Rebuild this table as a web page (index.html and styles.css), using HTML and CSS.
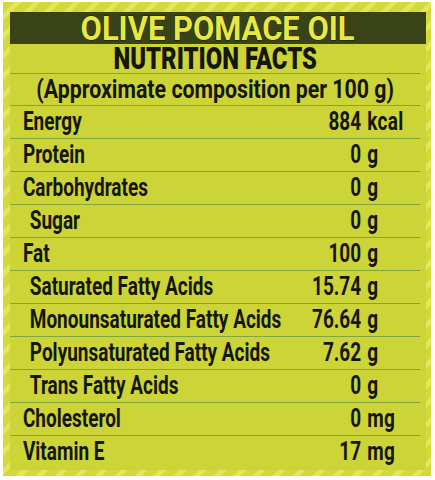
FILE: index.html
```html
<!DOCTYPE html>
<html lang="en">
<head>
  <meta charset="UTF-8">
  <title>Olive Pomace Oil - Nutrition Facts</title>
  <link rel="stylesheet" href="styles.css">
</head>
<body>
  <div class="label">
    <div class="panel">
      <div class="band"><span class="squeeze">OLIVE POMACE OIL</span></div>
      <div class="heading"><span class="squeeze">NUTRITION FACTS</span></div>
      <div class="sub"><span class="squeeze">(Approximate composition per 100 g)</span></div>

      <div class="row"><div class="cells"><span>Energy</span><span class="num">884</span><span class="unit">kcal</span></div></div>
      <div class="row"><div class="cells"><span>Protein</span><span class="num">0</span><span class="unit">g</span></div></div>
      <div class="row"><div class="cells"><span>Carbohydrates</span><span class="num">0</span><span class="unit">g</span></div></div>
      <div class="row"><div class="cells sub-item"><span>Sugar</span><span class="num">0</span><span class="unit">g</span></div></div>
      <div class="row"><div class="cells"><span>Fat</span><span class="num">100</span><span class="unit">g</span></div></div>
      <div class="row"><div class="cells sub-item"><span>Saturated Fatty Acids</span><span class="num">15.74</span><span class="unit">g</span></div></div>
      <div class="row"><div class="cells sub-item"><span>Monounsaturated Fatty Acids</span><span class="num">76.64</span><span class="unit">g</span></div></div>
      <div class="row"><div class="cells sub-item"><span>Polyunsaturated Fatty Acids</span><span class="num">7.62</span><span class="unit">g</span></div></div>
      <div class="row"><div class="cells sub-item"><span>Trans Fatty Acids</span><span class="num">0</span><span class="unit">g</span></div></div>
      <div class="row"><div class="cells"><span>Cholesterol</span><span class="num">0</span><span class="unit">mg</span></div></div>
      <div class="row last"><div class="cells"><span>Vitamin E</span><span class="num">17</span><span class="unit">mg</span></div></div>
    </div>
  </div>
</body>
</html>
```

FILE: styles.css
```css
:root {
  --label-bg: #ccd438;
  --stripe-a: #d2d93a;
  --stripe-b: #e2e65a;
  --band: #3a4318;
  --ink: #16170c;
  --rule: #7fa63a;
  --title: #e6e944;
}
body {
  margin: 0;
  background: #fff;
  font-family: Roboto, "Liberation Sans", sans-serif;
  color: var(--ink);
}
.label {
  width: 428px;
  height: 474px;
  margin: 2px 0 0 3px;
  padding: 10px 5px 6px 7px;
  box-sizing: border-box;
  background: repeating-linear-gradient(-45deg, var(--stripe-a) 0 9px, var(--stripe-b) 9px 14px);
}
.panel {
  background: var(--label-bg);
  height: 100%;
  overflow: hidden;
}
.squeeze {
  display: inline-block;
  white-space: nowrap;
}
/* flex keeps the wide unscaled text centred even when it overflows */
.band, .heading, .sub {
  display: flex;
  justify-content: center;
  align-items: center;
}
.band {
  height: 32px;
  background: var(--band);
  font-weight: 700;
  font-size: 34px;
  line-height: 32px;
  color: var(--title);
  -webkit-text-stroke: 1px #121506;
  paint-order: stroke fill;
}
.band .squeeze { transform: scaleX(0.91); }
.heading {
  height: 29px;
  margin-right: 6px;
  border-bottom: 1px solid var(--rule);
  font-weight: 900;
  font-size: 31px;
  line-height: 29px;
}
.heading .squeeze { transform: scaleX(0.77); }
.sub {
  height: 31px;
  margin-right: 6px;
  border-bottom: 1px solid var(--rule);
  font-size: 26px;
  font-weight: 700;
  line-height: 31px;
}
.sub .squeeze { transform: scaleX(0.82); }
.row {
  height: 32px;
  margin-right: 6px;
  border-bottom: 1px solid var(--rule);
}
.row.last { border-bottom: 0; }
.cells {
  /* glyphs are narrowed; grid measured in unscaled px */
  width: 538px;
  transform: scaleX(0.76);
  transform-origin: 0 0;
  display: grid;
  grid-template-columns: 1fr auto 76px;
  padding-left: 17px;
  box-sizing: border-box;
  font-size: 25px;
  font-weight: 700;
  line-height: 31px;
  white-space: nowrap;
}
.cells.sub-item { padding-left: 26px; }
.num { text-align: right; }
.unit { padding-left: 8px; letter-spacing: 0.5px; }
```
